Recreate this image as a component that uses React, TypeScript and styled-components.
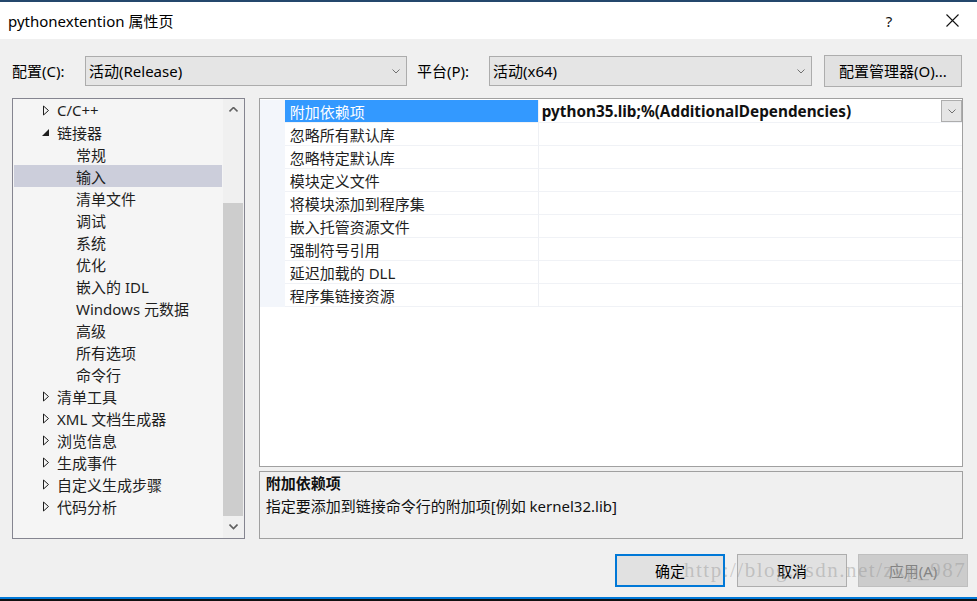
import React, { FC } from 'react';
import styled, { createGlobalStyle } from 'styled-components';

const GlobalStyle = createGlobalStyle`
  html, body {
    margin: 0;
    padding: 0;
    background: #000;
  }
  body {
    font-family: "Segoe UI", "Noto Sans", "Noto Sans CJK SC", sans-serif;
    font-size: 15px;
    color: #000;
  }
  * {
    box-sizing: border-box;
  }
`;

const Window = styled.div`
  position: relative;
  width: 977px;
  height: 601px;
  display: flex;
  flex-direction: column;
  overflow: hidden;
`;

const TopEdge = styled.div`
  height: 2px;
  background: #24476c;
`;

const TitleBar = styled.div`
  height: 37px;
  background: #fff;
  display: flex;
  align-items: center;
  padding-left: 8px;
`;

const TitleText = styled.div`
  flex: 1;
  font-size: 15px;
  line-height: 20px;
`;

const CaptionButton = styled.div<{ $w: number; $gap?: number }>`
  width: ${(p) => p.$w}px;
  margin-right: ${(p) => p.$gap ?? 0}px;
  height: 100%;
  display: flex;
  align-items: center;
  justify-content: center;
  font-size: 15px;
  color: #111;
`;

const Body = styled.div`
  flex: 1;
  background: #f0f0f0;
  display: flex;
  flex-direction: column;
  padding: 0 14px 0 12px;
`;

const ConfigRow = styled.div`
  margin-top: 16px;
  height: 32px;
  display: flex;
  align-items: center;
`;

const FieldLabel = styled.div<{ $w: number; $gap?: number }>`
  width: ${(p) => p.$w}px;
  margin-left: ${(p) => p.$gap ?? 0}px;
  line-height: 20px;
`;

const Combo = styled.div<{ $w: number }>`
  width: ${(p) => p.$w}px;
  height: 30px;
  background: #e5e5e5;
  border: 1px solid #acacac;
  display: flex;
  align-items: center;
  padding: 0 6px 0 3px;
`;

const ComboText = styled.div`
  flex: 1;
  line-height: 20px;
`;

const Button = styled.div<{ $w: number; $h: number; $gap?: number; $primary?: boolean; $disabled?: boolean }>`
  width: ${(p) => p.$w}px;
  height: ${(p) => p.$h}px;
  margin-left: ${(p) => p.$gap ?? 0}px;
  display: flex;
  align-items: center;
  justify-content: center;
  background: ${(p) => (p.$disabled ? '#cccccc' : '#e1e1e1')};
  border: ${(p) => (p.$primary ? '2px solid #0078d7' : p.$disabled ? '1px solid #bfbfbf' : '1px solid #adadad')};
  color: ${(p) => (p.$disabled ? '#838383' : '#000')};
  line-height: 20px;
`;

const Main = styled.div`
  margin-top: 11px;
  height: 441px;
  display: flex;
  gap: 14px;
`;

const Tree = styled.div`
  width: 233px;
  border: 1px solid #858590;
  background: #f5f5f5;
  display: flex;
`;

const TreeList = styled.div`
  flex: 1;
  padding: 0 1px 0 1px;
`;

const TreeRow = styled.div<{ $level: number; $selected?: boolean }>`
  height: 22px;
  display: flex;
  align-items: center;
  padding-left: ${(p) => (p.$level === 1 ? 27 : 62)}px;
  background: ${(p) => (p.$selected ? '#cccedb' : 'transparent')};
  color: #1e1e1e;
  white-space: nowrap;
`;

const Expander = styled.div`
  width: 16px;
  height: 22px;
  display: flex;
  align-items: center;
`;

const ScrollBar = styled.div`
  width: 21px;
  background: #f0f0f0;
  display: flex;
  flex-direction: column;
`;

const ScrollArrow = styled.div`
  height: 22px;
  display: flex;
  align-items: center;
  justify-content: center;
`;

const ScrollTrack = styled.div`
  flex: 1;
  display: flex;
  flex-direction: column;
`;

const Thumb = styled.div<{ $offset: number }>`
  margin-top: ${(p) => p.$offset}px;
  flex: 1;
  background: #cdcdcd;
  margin-right: 1px;
`;

const RightCol = styled.div`
  width: 705px;
  display: flex;
  flex-direction: column;
  gap: 4px;
`;

const Grid = styled.div`
  height: 369px;
  border: 1px solid #a0a0a0;
  background: #fff;
  padding-top: 1px;
`;

const PropRow = styled.div`
  height: 23px;
  display: flex;
`;

const Gutter = styled.div`
  width: 25px;
  background: #f3f6fb;
`;

const NameCell = styled.div<{ $selected?: boolean }>`
  width: 253px;
  height: 23px;
  padding-left: 5px;
  display: flex;
  align-items: center;
  background: ${(p) => (p.$selected ? '#3399ff' : '#fff')};
  color: ${(p) => (p.$selected ? '#fff' : '#1e1e1e')};
  border-bottom: 1px solid #f0f2f6;
`;

const ValueCell = styled.div`
  flex: 1;
  height: 23px;
  border-left: 1px solid #eef0f4;
  border-bottom: 1px solid #f0f2f6;
  display: flex;
  align-items: center;
  padding-left: 3px;
`;

const ValueText = styled.div`
  flex: 1;
  font-weight: 700;
  font-size: 15.3px;
  color: #111;
  line-height: 20px;
`;

const DropButton = styled.div`
  width: 21px;
  height: 22px;
  background: #e5e5e5;
  border: 1px solid #adadad;
  display: flex;
  align-items: center;
  justify-content: center;
`;

const Description = styled.div`
  height: 68px;
  border: 1px solid #a0a0a0;
  background: #f0f0f0;
  padding-left: 6px;
`;

const DescTitle = styled.div`
  font-weight: 700;
  line-height: 23px;
  color: #111;
`;

const DescText = styled.div`
  line-height: 23px;
  color: #111;
`;

const Footer = styled.div`
  margin-top: 15px;
  margin-right: -5px;
  height: 33px;
  display: flex;
  justify-content: flex-end;
`;

const BottomEdge = styled.div`
  height: 2px;
  background: #0078d7;
`;

const BlackEdge = styled.div`
  height: 2px;
  background: #111;
`;

// watermark stamped over the footer of the original screenshot
const Watermark = styled.div`
  position: absolute;
  left: 684px;
  top: 558px;
  font-family: "Liberation Serif", serif;
  font-size: 21px;
  letter-spacing: 1.5px;
  color: rgba(150, 150, 150, 0.45);
  pointer-events: none;
  white-space: nowrap;
`;

const ChevronDown: FC<{ w?: number; color?: string; sw?: number }> = ({ w = 8, color = '#606060', sw = 1 }) => (
  <svg width={w} height={w / 2 + 1} viewBox={`0 0 ${w} ${w / 2 + 1}`}>
    <polyline points={`0.5,0.5 ${w / 2},${w / 2} ${w - 0.5},0.5`} fill="none" stroke={color} strokeWidth={sw} />
  </svg>
);

const ChevronUp: FC<{ w?: number; color?: string; sw?: number }> = ({ w = 8, color = '#606060', sw = 1 }) => (
  <svg width={w} height={w / 2 + 1} viewBox={`0 0 ${w} ${w / 2 + 1}`}>
    <polyline points={`0.5,${w / 2} ${w / 2},0.5 ${w - 0.5},${w / 2}`} fill="none" stroke={color} strokeWidth={sw} />
  </svg>
);

const Collapsed: FC = () => (
  <svg width="10" height="11" viewBox="0 0 10 11">
    <polygon points="2.5,1 7.5,5.5 2.5,10" fill="none" stroke="#1e1e1e" strokeWidth="1" />
  </svg>
);

const Expanded: FC = () => (
  <svg width="10" height="11" viewBox="0 0 10 11">
    <polygon points="8,2 8,9 1,9" fill="#1e1e1e" />
  </svg>
);

type TreeItem = { label: string; level: 1 | 2; state?: 'open' | 'closed'; selected?: boolean };

const treeItems: TreeItem[] = [
  { label: 'C/C++', level: 1, state: 'closed' },
  { label: '链接器', level: 1, state: 'open' },
  { label: '常规', level: 2 },
  { label: '输入', level: 2, selected: true },
  { label: '清单文件', level: 2 },
  { label: '调试', level: 2 },
  { label: '系统', level: 2 },
  { label: '优化', level: 2 },
  { label: '嵌入的 IDL', level: 2 },
  { label: 'Windows 元数据', level: 2 },
  { label: '高级', level: 2 },
  { label: '所有选项', level: 2 },
  { label: '命令行', level: 2 },
  { label: '清单工具', level: 1, state: 'closed' },
  { label: 'XML 文档生成器', level: 1, state: 'closed' },
  { label: '浏览信息', level: 1, state: 'closed' },
  { label: '生成事件', level: 1, state: 'closed' },
  { label: '自定义生成步骤', level: 1, state: 'closed' },
  { label: '代码分析', level: 1, state: 'closed' },
];

const properties = [
  '附加依赖项',
  '忽略所有默认库',
  '忽略特定默认库',
  '模块定义文件',
  '将模块添加到程序集',
  '嵌入托管资源文件',
  '强制符号引用',
  '延迟加载的 DLL',
  '程序集链接资源',
];

const App: FC = () => {
  return (
    <>
      <GlobalStyle />
      <Window>
        <TopEdge />
        <TitleBar>
          <TitleText>pythonextention 属性页</TitleText>
          <CaptionButton $w={40} $gap={18}>?</CaptionButton>
          <CaptionButton $w={50}>
            <svg width="13" height="13" viewBox="0 0 13 13">
              <path d="M0.5 0.5 L12.5 12.5 M12.5 0.5 L0.5 12.5" stroke="#111" strokeWidth="1.1" />
            </svg>
          </CaptionButton>
        </TitleBar>
        <Body>
          <ConfigRow>
            <FieldLabel $w={73}>配置(C):</FieldLabel>
            <Combo $w={322}>
              <ComboText>活动(Release)</ComboText>
              <ChevronDown w={8} color="#707070" />
            </Combo>
            <FieldLabel $w={72} $gap={10}>平台(P):</FieldLabel>
            <Combo $w={323}>
              <ComboText>活动(x64)</ComboText>
              <ChevronDown w={8} color="#707070" />
            </Combo>
            <Button $w={138} $h={32} $gap={12}>配置管理器(O)...</Button>
          </ConfigRow>
          <Main>
            <Tree>
              <TreeList>
                {treeItems.map((item) => (
                  <TreeRow key={item.label} $level={item.level} $selected={item.selected}>
                    {item.level === 1 && (
                      <Expander>{item.state === 'open' ? <Expanded /> : <Collapsed />}</Expander>
                    )}
                    {item.label}
                  </TreeRow>
                ))}
              </TreeList>
              <ScrollBar>
                <ScrollArrow>
                  <ChevronUp w={9} color="#606060" sw={1.6} />
                </ScrollArrow>
                <ScrollTrack>
                  <Thumb $offset={82} />
                </ScrollTrack>
                <ScrollArrow>
                  <ChevronDown w={9} color="#606060" sw={1.6} />
                </ScrollArrow>
              </ScrollBar>
            </Tree>
            <RightCol>
              <Grid>
                {properties.map((name, i) => (
                  <PropRow key={name}>
                    <Gutter />
                    <NameCell $selected={i === 0}>{name}</NameCell>
                    <ValueCell>
                      {i === 0 && (
                        <>
                          <ValueText>python35.lib;%(AdditionalDependencies)</ValueText>
                          <DropButton>
                            <ChevronDown w={8} color="#707070" />
                          </DropButton>
                        </>
                      )}
                    </ValueCell>
                  </PropRow>
                ))}
              </Grid>
              <Description>
                <DescTitle>附加依赖项</DescTitle>
                <DescText>指定要添加到链接命令行的附加项[例如 kernel32.lib]</DescText>
              </Description>
            </RightCol>
          </Main>
          <Footer>
            <Button $w={110} $h={33} $primary>确定</Button>
            <Button $w={110} $h={33} $gap={12}>取消</Button>
            <Button $w={110} $h={33} $gap={11} $disabled>应用(A)</Button>
          </Footer>
        </Body>
        <BottomEdge />
        <BlackEdge />
        <Watermark>http://blog.csdn.net/zkp_987</Watermark>
      </Window>
    </>
  );
};

export default App;
